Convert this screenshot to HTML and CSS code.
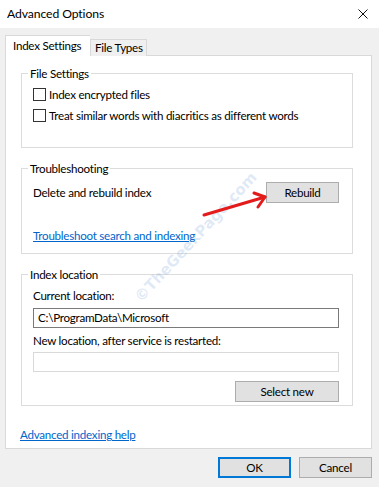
FILE: index.html
```html
<!DOCTYPE html>
<html>
<head>
<meta charset="utf-8">
<link rel="stylesheet" href="styles.css">
</head>
<body>
<div class="window">
  <div class="titlebar">
    <span class="title">Advanced Options</span>
    <svg class="close" width="10" height="10" viewBox="0 0 10 10"><path d="M0.5 0.5L9.5 9.5M9.5 0.5L0.5 9.5" stroke="#111" stroke-width="1" fill="none"/></svg>
  </div>
  <div class="body">
    <div class="tabs">
      <div class="tab active">Index Settings</div>
      <div class="tab">File Types</div>
    </div>
    <div class="panel">
      <fieldset class="group g1">
        <legend>File Settings</legend>
        <label class="check"><span class="box"></span>Index encrypted files</label>
        <label class="check"><span class="box"></span>Treat similar words with diacritics as different words</label>
      </fieldset>
      <fieldset class="group g2">
        <legend>Troubleshooting</legend>
        <div class="row">
          <span>Delete and rebuild index</span>
          <span class="btn">Rebuild</span>
        </div>
        <a class="link" href="#">Troubleshoot search and indexing</a>
      </fieldset>
      <fieldset class="group g3">
        <legend>Index location</legend>
        <div class="lbl">Current location:</div>
        <div class="input">C:\ProgramData\Microsoft</div>
        <div class="lbl lbl2">New location, after service is restarted:</div>
        <div class="input disabled"></div>
        <div class="btnrow"><span class="btn">Select new</span></div>
      </fieldset>
      <a class="link help" href="#">Advanced indexing help</a>
    </div>
    <div class="footer">
      <span class="btn ok">OK</span>
      <span class="btn">Cancel</span>
    </div>
  </div>
  <div class="watermark">©TheGeekPage.com</div>
  <svg class="arrow" width="70" height="30" viewBox="0 0 70 30">
    <path d="M3 25 L64 7" stroke="#e31b1b" stroke-width="3" fill="none" stroke-linecap="round"/>
    <path d="M53 3 L64 7 L57 17" stroke="#e31b1b" stroke-width="3" fill="none" stroke-linecap="round" stroke-linejoin="round"/>
  </svg>
</div>
</body>
</html>
```
FILE: styles.css
```css
* { box-sizing: border-box; }
html, body { margin: 0; padding: 0; }
body {
  font-family: Lato, "Noto Sans", sans-serif;
  font-size: 11.6px;
  letter-spacing: -0.25px;
  color: #000;
  background: #f0f0f0;
  white-space: nowrap;
}
.window {
  position: relative;
  width: 379px;
  height: 487px;
  overflow: hidden;
  background: #f0f0f0;
}
.titlebar {
  height: 28px;
  background: #fff;
  display: flex;
  align-items: center;
  justify-content: space-between;
  padding: 0 11px 2px 7px;
}
.title { font-size: 12.2px; letter-spacing: -0.1px; }
.close { margin-top: 1px; }
.body { padding: 7px 0 0 5px; }
.tabs {
  display: flex;
  align-items: flex-end;
  height: 20px;
  position: relative;
  z-index: 2;
}
.tab {
  height: 17px;
  line-height: 15px;
  width: 57px;
  padding: 0 0 0 4px;
  border: 1px solid #d9d9d9;
  border-bottom: none;
  background: #f0f0f0;
  margin-bottom: -1px;
}
.tab.active {
  height: 21px;
  line-height: 19px;
  padding: 0 0 0 7px;
  background: #fff;
  border-right: none;
  width: 85px;
}
.panel {
  width: 367px;
  height: 394px;
  background: #fff;
  border: 1px solid #d9d9d9;
  padding: 10px 18px 0 15px;
  display: flex;
  flex-direction: column;
}
.group {
  margin: 0;
  border: 1px solid #dcdcdc;
  padding: 0 13px 0 11px;
  min-width: 0;
}
.group legend {
  padding: 0 2px;
  margin-left: -5px;
  line-height: 15px;
}
.g1 { height: 82px; padding-top: 3px; }
.g2 { height: 93px; margin-top: 13px; padding-top: 6px; }
.g3 { height: 139px; margin-top: 13px; padding-top: 3px; }
.check {
  display: flex;
  align-items: center;
  height: 21px;
  gap: 3px;
}
.box {
  width: 13px;
  height: 13px;
  border: 1px solid #333;
  background: #fff;
  flex: none;
}
.row {
  display: flex;
  align-items: center;
  justify-content: space-between;
  height: 21px;
}
.btn {
  display: inline-flex;
  align-items: center;
  justify-content: center;
  width: 73px;
  height: 21px;
  background: #e1e1e1;
  border: 1px solid #adadad;
  padding-bottom: 1px;
}
.link {
  color: #0066cc;
  text-decoration: underline;
  display: block;
  line-height: 16px;
}
.g2 .link { margin-top: 25px; }
.lbl { line-height: 16px; margin-top: 3px; }
.lbl2 { margin-top: 5px; }
.input {
  height: 20px;
  border: 1px solid #7a7a7a;
  margin-top: 4px;
  padding: 0 4px;
  line-height: 18px;
}
.input.disabled { border-color: #d9d9d9; margin-top: 3px; }
.btnrow {
  display: flex;
  justify-content: flex-end;
  margin-top: 9px;
}
.btnrow .btn { width: 104px; }
.help { margin-top: 21px; margin-left: -1px; }
.footer {
  display: flex;
  justify-content: flex-end;
  gap: 8px;
  padding: 8px 7px 0 0;
}
.footer .btn { width: 73px; }
.footer .ok { border: 2px solid #0078d7; }
.watermark {
  position: absolute;
  left: 112px;
  top: 232px;
  width: 160px;
  text-align: center;
  font-family: "DejaVu Sans", sans-serif;
  font-weight: bold;
  font-size: 15px;
  letter-spacing: 0;
  color: rgba(90, 140, 210, 0.2);
  transform: rotate(-47deg);
  pointer-events: none;
}
.arrow {
  position: absolute;
  left: 201px;
  top: 190px;
}
```
